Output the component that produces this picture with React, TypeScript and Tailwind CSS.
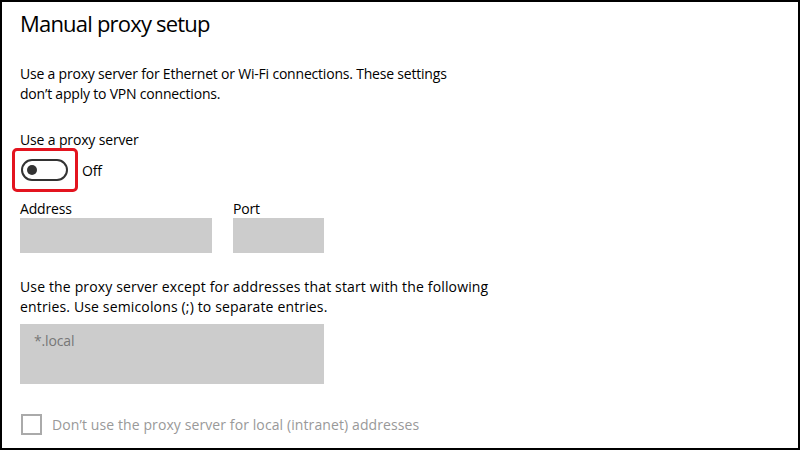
import React from 'react';

const font = { fontFamily: '"Open Sans", "Noto Sans", sans-serif' };

export default function App() {
  return (
    <div
      className="w-[800px] h-[450px] bg-white border-2 border-black text-[#000] overflow-hidden flex flex-col pl-[18px]"
      style={font}
    >
      <h1 className="text-[22px] leading-none font-normal tracking-[-0.8px] mt-[10px]">Manual proxy setup</h1>

      <p className="text-[14px] leading-[20px] tracking-[-0.2px] mt-[30px]">
        Use a proxy server for Ethernet or Wi-Fi connections. These settings
        <br />
        don’t apply to VPN connections.
      </p>

      <div className="text-[14px] leading-[20px] tracking-[-0.15px] mt-[26px]">Use a proxy server</div>

      {/* toggle highlighted with red box */}
      <div className="flex items-center -mt-[2px]">
        <div className="-ml-[8px] w-[66px] h-[44px] border-[3px] border-[#e3141f] rounded-[5px] flex items-center pl-[6px]">
          <div className="w-[47px] h-[22px] rounded-full border-2 border-[#333] flex items-center pl-[4px]">
            <div className="w-[10px] h-[10px] rounded-full bg-[#333]" />
          </div>
        </div>
        <span className="ml-[4px] text-[14px] tracking-[-0.15px]">Off</span>
      </div>

      <div className="flex gap-[21px] mt-[8px]">
        <div className="flex flex-col">
          <span className="text-[14px] leading-[18px] tracking-[-0.15px]">Address</span>
          <div className="w-[192px] h-[35px] bg-[#cccccc]" />
        </div>
        <div className="flex flex-col">
          <span className="text-[14px] leading-[18px] tracking-[-0.15px]">Port</span>
          <div className="w-[91px] h-[35px] bg-[#cccccc]" />
        </div>
      </div>

      <p className="text-[14px] leading-[20px] tracking-[0.15px] mt-[24px]">
        Use the proxy server except for addresses that start with the following
        <br />
        entries. Use semicolons (;) to separate entries.
      </p>

      <div className="w-[304px] h-[60px] bg-[#cccccc] mt-[7px] px-[14px] pt-[7px] text-[14px] leading-[20px] tracking-[-0.15px] text-[#777]">
        *.local
      </div>

      <div className="flex items-center mt-[30px]">
        <div className="w-[21px] h-[21px] border-2 border-[#aaa] ml-[1px]" />
        <span className="ml-[10px] text-[14px] tracking-[0.1px] text-[#999]">
          Don’t use the proxy server for local (intranet) addresses
        </span>
      </div>
    </div>
  );
}
